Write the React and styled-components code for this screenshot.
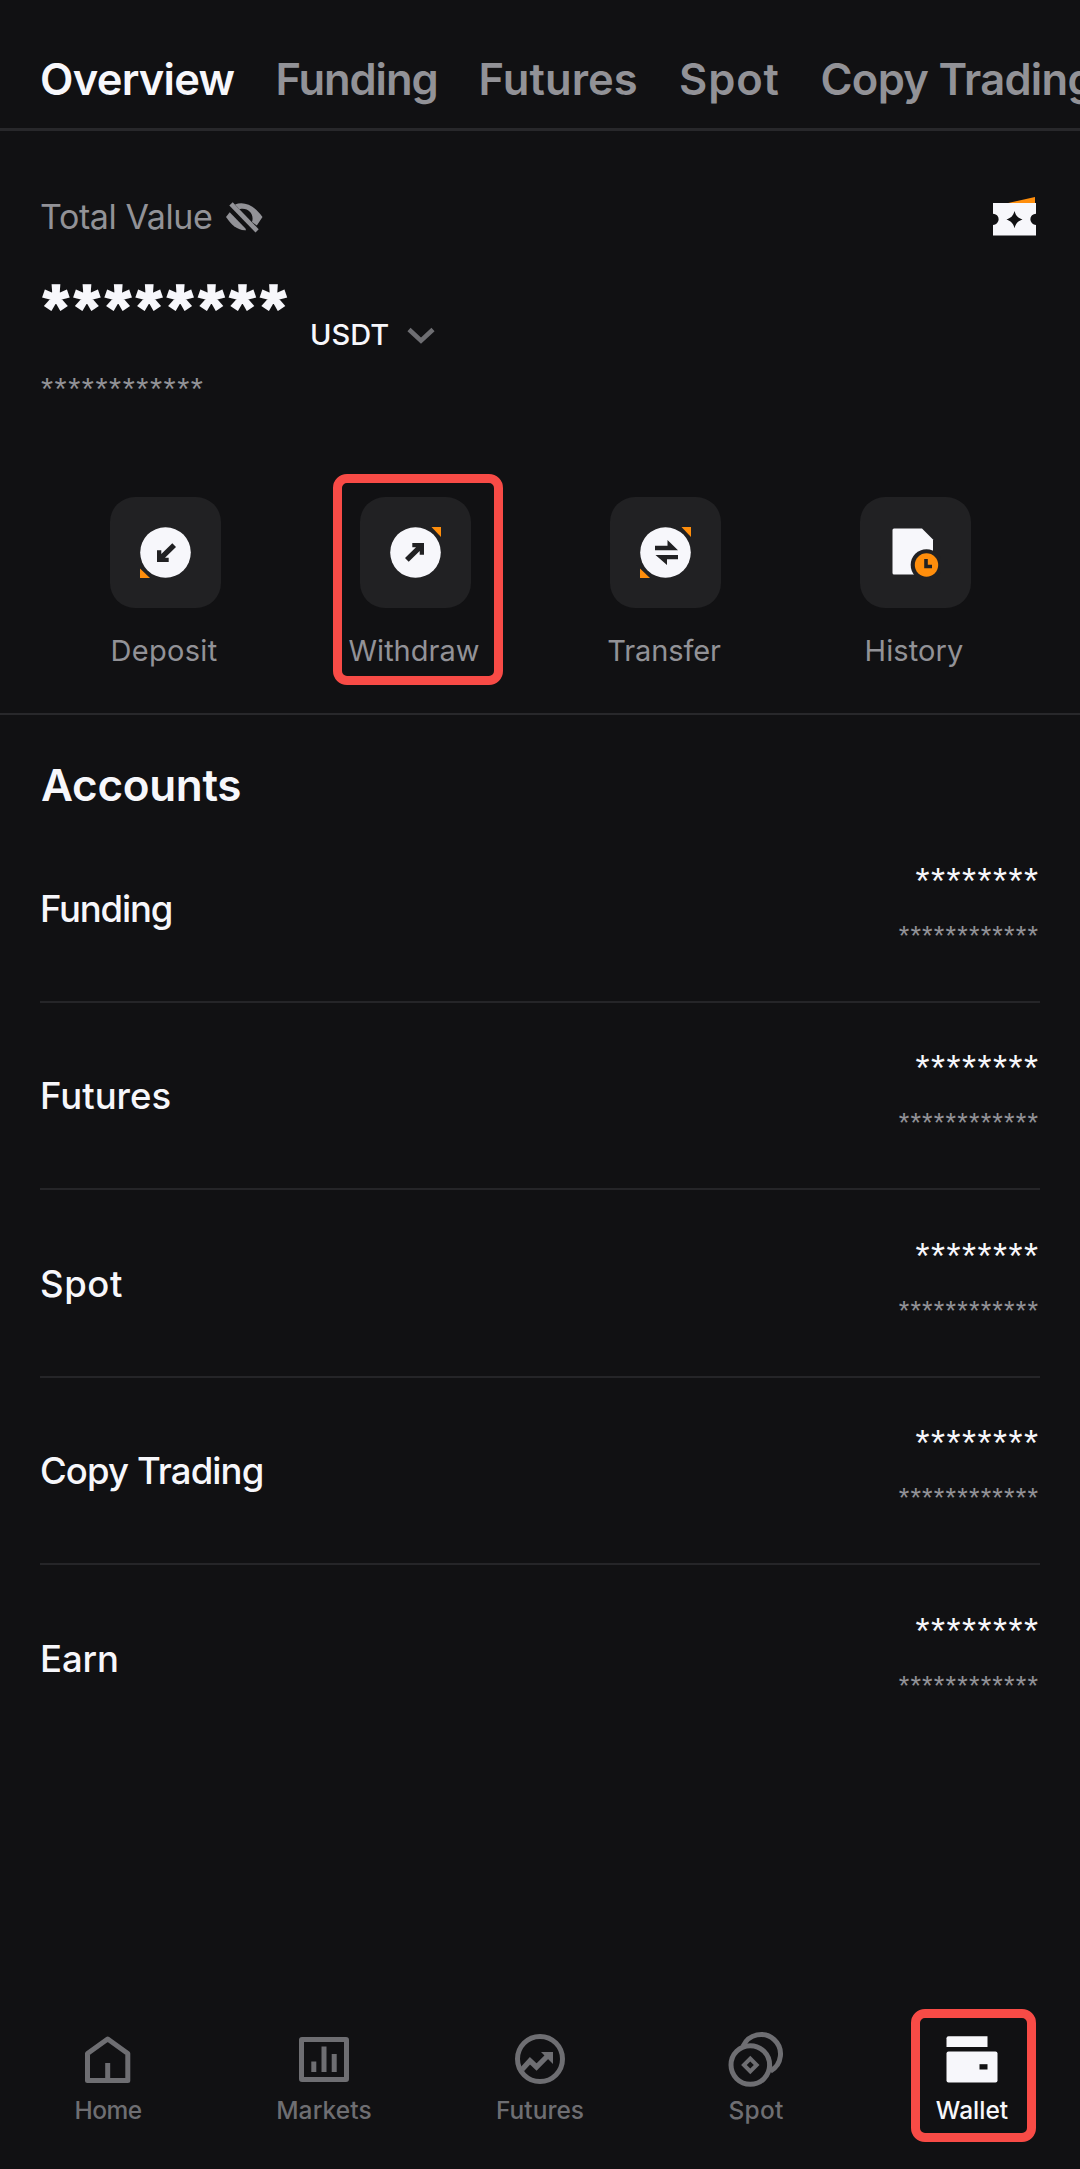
import React from "react";
import styled, { createGlobalStyle } from "styled-components";

const color = {
  bg: "#111113",
  text: "#f7f7fb",
  muted: "#929297",
  dim: "#6e6e72",
  line: "#28282b",
  tile: "#212123",
  orange: "#ff8e0c",
  red: "#f84b46",
};

const GlobalStyle = createGlobalStyle`
  * { box-sizing: border-box; }
  body { margin: 0; background: ${color.bg}; }
`;

const Page = styled.main`
  width: 1080px;
  height: 2169px;
  overflow: hidden;
  display: flex;
  flex-direction: column;
  background: ${color.bg};
  color: ${color.text};
  font-family: Inter, "Liberation Sans", sans-serif;
  svg { display: block; flex: none; }
`;

const Tabs = styled.nav`
  display: flex;
  gap: 42px;
  height: 131px;
  padding: 51px 0 0 40px;
  border-bottom: 3px solid ${color.line};
  overflow: hidden;
`;

const Tab = styled.span`
  flex: none;
  width: ${(p) => p.$width}px;
  font-size: 43.5px;
  line-height: 56px;
  font-weight: 600;
  letter-spacing: ${(p) => p.$track}px;
  white-space: nowrap;
  color: ${(p) => (p.$active ? color.text : color.muted)};
`;

const Summary = styled.section`
  padding: 66px 44px 0 40px;
  height: 366px;
`;

const SummaryHead = styled.div`
  display: flex;
  align-items: center;
  height: 40px;
`;

const TotalLabel = styled.span`
  width: 186px;
  font-size: 34px;
  line-height: 40px;
  letter-spacing: ${(p) => p.$track}px;
  white-space: nowrap;
  color: ${color.muted};
`;

const Spacer = styled.span`
  flex: 1;
`;

const Stars = styled.span`
  font-family: "Liberation Sans", Arial, sans-serif;
  font-size: ${(p) => p.$size}px;
  line-height: ${(p) => p.$line}px;
  font-weight: ${(p) => (p.$bold ? 700 : 400)};
  -webkit-text-stroke: ${(p) => (p.$bold ? "1.6px currentColor" : "0")};
  letter-spacing: ${(p) => p.$track}px;
  margin-right: ${(p) => (p.$end ? -p.$track : 0)}px;
  color: ${(p) => (p.$muted ? color.muted : color.text)};
  white-space: nowrap;
`;

const BalanceRow = styled.div`
  display: flex;
  height: 90px;
  margin: 33px 0 9px;
`;

const BalanceStars = styled.div`
  width: 270px;
  padding-left: 3px;
  line-height: 0;
`;

const SecondaryBalance = styled.div`
  padding: 1px 0 0 1px;
  line-height: 0;
`;

const Currency = styled.div`
  display: flex;
  align-items: center;
  gap: 17px;
  height: 36px;
  margin-top: 47px;
`;

const CurrencyName = styled.span`
  width: 80px;
  font-size: 29px;
  font-weight: 500;
  line-height: 36px;
  letter-spacing: ${(p) => p.$track}px;
`;

const Actions = styled.section`
  display: grid;
  grid-template-columns: repeat(4, 1fr);
  height: 218px;
  padding: 0 40px;
  border-bottom: 2px solid ${color.line};
`;

const Action = styled.div`
  position: relative;
  display: flex;
  flex-direction: column;
  align-items: center;
`;

const Tile = styled.div`
  display: flex;
  align-items: center;
  justify-content: center;
  width: 111px;
  height: 111px;
  border-radius: 25px;
  background: ${color.tile};
`;

const ActionLabel = styled.span`
  margin: 24px 2px 0 0;
  font-size: 29px;
  line-height: 38px;
  letter-spacing: ${(p) => p.$track}px;
  color: ${color.muted};
`;

const Highlight = styled.div`
  position: absolute;
  top: ${(p) => p.$top}px;
  left: ${(p) => p.$left}px;
  width: ${(p) => p.$width}px;
  height: ${(p) => p.$height}px;
  border: 9px solid ${color.red};
  border-radius: 14px;
`;

const Accounts = styled.section`
  padding: 43px 40px 0;
`;

const Heading = styled.h2`
  margin: 0 0 3px;
  padding-left: 1px;
  font-size: 44px;
  line-height: 54px;
  font-weight: 600;
  letter-spacing: ${(p) => p.$track}px;
`;

const Account = styled.div`
  display: flex;
  align-items: center;
  justify-content: space-between;
  height: 187.5px;
  padding-right: 2px;
  border-bottom: 2px solid ${(p) => (p.$last ? "transparent" : "#252528")};
`;

const AccountName = styled.span`
  padding-top: 2px;
  font-size: 36.5px;
  line-height: 48px;
  font-weight: 500;
  letter-spacing: ${(p) => p.$track}px;
`;

const Amounts = styled.div`
  display: flex;
  flex-direction: column;
  align-items: flex-end;
  padding-top: 2px;
`;

const BottomNav = styled.nav`
  display: grid;
  grid-template-columns: repeat(5, 1fr);
  height: 161px;
  margin-top: auto;
`;

const NavItem = styled.div`
  position: relative;
  display: flex;
  flex-direction: column;
  align-items: center;
  gap: 8px;
  padding-top: 23px;
  color: ${(p) => (p.$active ? color.text : color.dim)};
`;

const NavLabel = styled.span`
  font-size: 24.5px;
  line-height: 30px;
  font-weight: 500;
  letter-spacing: ${(p) => p.$track}px;
`;

const EyeOff = () => (
  <svg width="37" height="31" viewBox="0 0 37 31" fill={color.muted}>
    <path d="M3.300 3.600 6.700 .3 32.700 27.200 29.500 30.500Z" />
    <path d="M9 2.500C18-.8 28 3 36.500 15L30.800 23.500 26 20C28.500 12.500 22.500 5 13.500 7.200Z" />
    <path d="M3.700 10.300 0 15C5 22 11 28.800 20 28.200L19.500 26.500Z" />
  </svg>
);

const Ticket = () => (
  <svg width="43" height="41" viewBox="0 0 43 41">
    <path d="M13 6.500 42 0V7H13Z" fill={color.orange} />
    <path
      fillRule="evenodd"
      fill={color.text}
      d="M0 6H43V16.700A5.600 5.600 0 0 0 43 28V38.500H0V28A5.600 5.600 0 0 0 0 16.700ZM21.500 14C20 19 18.500 20.500 13.500 22.500 18.500 24.500 20 26 21.500 31 23 26 24.500 24.500 29.500 22.500 24.500 20.500 23 19 21.500 14Z"
    />
  </svg>
);

const Chevron = () => (
  <svg width="28" height="20" viewBox="0 0 28 20">
    <path d="M2 4.500 14 15.700 26 4.500" fill="none" stroke={color.dim} strokeWidth="4.600" />
  </svg>
);

const BottomCorner = () => <path d="M0 41.500V51H10Z" fill={color.orange} />;
const TopCorner = () => <path d="M41.500 0H51V10Z" fill={color.orange} />;

const DepositIcon = () => (
  <svg width="51" height="51" viewBox="0 0 51 51">
    <BottomCorner />
    <circle cx="25.500" cy="25.500" r="25.300" fill={color.text} />
    <path d="M17 23.300H21.300V27L32.300 16.200 36 19.900 25 30.700H28.700V35H17Z" fill={color.tile} />
  </svg>
);

const WithdrawIcon = () => (
  <svg width="51" height="51" viewBox="0 0 51 51">
    <TopCorner />
    <circle cx="25.500" cy="25.500" r="25.300" fill={color.text} />
    <path d="M34 27.700H29.700V24L18.700 34.800 15 31.100 26 20.300H22.300V16H34Z" fill={color.tile} />
  </svg>
);

const TransferIcon = () => (
  <svg width="51" height="51" viewBox="0 0 51 51">
    <BottomCorner />
    <TopCorner />
    <circle cx="25.500" cy="25.500" r="25.300" fill={color.text} />
    <path d="M15 18.700H27.500V13L38 23.300H15Z" fill={color.tile} />
    <path d="M38 32.300H27V38L15.500 28H38Z" fill={color.tile} />
  </svg>
);

const HistoryIcon = () => (
  <svg width="51" height="51" viewBox="0 0 51 51">
    <path d="M4 1.500H32L43 12.500V47.500H4A1.500 1.500 0 0 1 2.500 46V3A1.500 1.500 0 0 1 4 1.500Z" fill={color.text} />
    <circle cx="36.500" cy="38" r="15.800" fill={color.tile} />
    <circle cx="36.500" cy="38" r="11.700" fill={color.orange} />
    <path d="M36 32V39.500H42" fill="none" stroke={color.tile} strokeWidth="3.600" />
  </svg>
);

const NavSvg = ({ children }) => (
  <svg width="60" height="56" viewBox="0 0 60 56" fill="none" stroke="currentColor" strokeWidth="5">
    {children}
  </svg>
);

const HomeIcon = () => (
  <NavSvg>
    <path d="M9.500 49.500V22.500L29.700 8 49.800 22.500V49.500Z" strokeLinejoin="round" />
    <path d="M29.700 32V49" />
  </NavSvg>
);

const MarketsIcon = () => (
  <NavSvg>
    <rect x="7.500" y="8.500" width="45" height="40" rx=".5" strokeLinejoin="round" />
    <path d="M19.800 41V30.500M30 41V15.500M40.200 41V23" />
  </NavSvg>
);

const FuturesIcon = () => (
  <NavSvg>
    <circle cx="30" cy="28" r="22.500" />
    <path d="M12 38.500 20 29.800 26.500 36 38.500 24" strokeWidth="5.300" />
    <path d="M31 21H43V33L39.500 29.500 34.500 24.500Z" fill="currentColor" stroke="none" />
  </NavSvg>
);

const SpotIcon = () => (
  <NavSvg>
    <path d="M17.200 15A19.500 19.500 0 1 1 44.500 40" />
    <circle cx="24.300" cy="34" r="19.300" />
    <rect x="19.800" y="29.500" width="9" height="9" strokeWidth="4" transform="rotate(45 24.300 34)" />
  </NavSvg>
);

const WalletIcon = () => (
  <NavSvg>
    <path d="M6.500 5.300H45.500V16H4.500V7.300A2 2 0 0 1 6.500 5.300Z" fill="currentColor" stroke="none" />
    <rect x="4.500" y="20.500" width="51" height="31" rx="2" fill="currentColor" stroke="none" />
    <rect x="37.500" y="33.200" width="8" height="5.300" fill={color.bg} stroke="none" />
  </NavSvg>
);

const tabs = [
  { label: "Overview", width: 193.5, track: -0.75, active: true },
  { label: "Funding", width: 161, track: -1.1 },
  { label: "Futures", width: 158.5, track: 0.1 },
  { label: "Spot", width: 99.5, track: 0.9 },
  { label: "Copy Trading", width: 290, track: -0.7 },
];

const actions = [
  { label: "Deposit", Icon: DepositIcon, track: 0.3 },
  { label: "Withdraw", Icon: WithdrawIcon, track: 0, marked: true },
  { label: "Transfer", Icon: TransferIcon, track: -0.1 },
  { label: "History", Icon: HistoryIcon, track: 0.1 },
];

const accounts = [
  { name: "Funding", track: -1.2 },
  { name: "Futures", track: 0 },
  { name: "Spot", track: 0.6 },
  { name: "Copy Trading", track: -0.9 },
  { name: "Earn", track: -0.1 },
];

const navItems = [
  { label: "Home", Icon: HomeIcon, track: -0.5 },
  { label: "Markets", Icon: MarketsIcon, track: 0.1 },
  { label: "Futures", Icon: FuturesIcon, track: 0 },
  { label: "Spot", Icon: SpotIcon, track: 0.2 },
  { label: "Wallet", Icon: WalletIcon, track: 0, active: true },
];

export default function App() {
  return (
    <Page>
      <GlobalStyle />
      <Tabs>
        {tabs.map((t) => (
          <Tab key={t.label} $width={t.width} $track={t.track} $active={t.active}>
            {t.label}
          </Tab>
        ))}
      </Tabs>

      <Summary>
        <SummaryHead>
          <TotalLabel $track={-0.4}>Total Value</TotalLabel>
          <EyeOff />
          <Spacer />
          <Ticket />
        </SummaryHead>
        <BalanceRow>
          <BalanceStars>
            <Stars $size={66} $line={76} $track={5.4} $bold>********</Stars>
          </BalanceStars>
          <Currency>
            <CurrencyName $track={0}>USDT</CurrencyName>
            <Chevron />
          </Currency>
        </BalanceRow>
        <SecondaryBalance>
          <Stars $size={31} $line={40} $track={1.55} $muted>************</Stars>
        </SecondaryBalance>
      </Summary>

      <Actions>
        {actions.map(({ label, Icon, track, marked }) => (
          <Action key={label}>
            <Tile>
              <Icon />
            </Tile>
            <ActionLabel $track={track}>{label}</ActionLabel>
            {marked && <Highlight $top={-23} $left={43} $width={170} $height={211} />}
          </Action>
        ))}
      </Actions>

      <Accounts>
        <Heading $track={-0.3}>Accounts</Heading>
        {accounts.map((a, i) => (
          <Account key={a.name} $last={i === accounts.length - 1}>
            <AccountName $track={a.track}>{a.name}</AccountName>
            <Amounts>
              <Stars $size={36} $line={54} $track={1.5} $end>********</Stars>
              <Stars $size={27} $line={54} $track={1.2} $muted $end>************</Stars>
            </Amounts>
          </Account>
        ))}
      </Accounts>

      <BottomNav>
        {navItems.map(({ label, Icon, track, active }) => (
          <NavItem key={label} $active={active}>
            <Icon />
            <NavLabel $track={track}>{label}</NavLabel>
            {active && <Highlight $top={0.5} $left={46.5} $width={125} $height={133} />}
          </NavItem>
        ))}
      </BottomNav>
    </Page>
  );
}
